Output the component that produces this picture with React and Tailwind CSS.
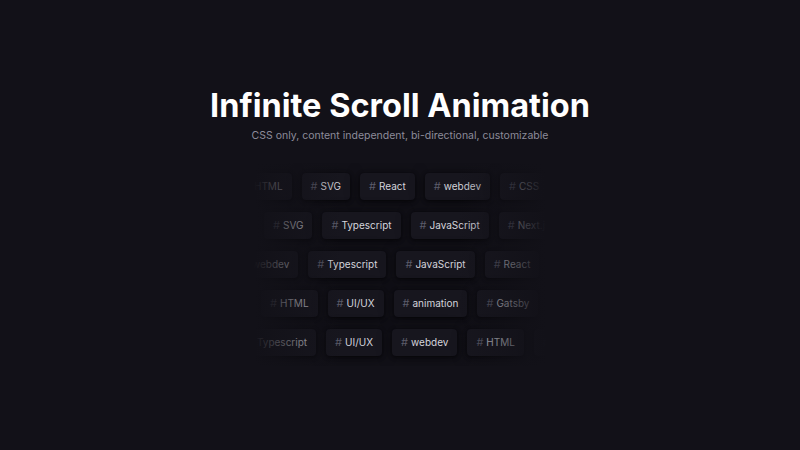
const rows = [
  { offset: "ml-[-19px]", tags: ["HTML", "SVG", "React", "webdev", "CSS", "Gatsby"] },
  { offset: "ml-[10px]", tags: ["SVG", "Typescript", "JavaScript", "Next.js", "HTML"] },
  { offset: "ml-[-21px]", tags: ["webdev", "Typescript", "JavaScript", "React", "UI/UX"] },
  { offset: "ml-[7px]", tags: ["HTML", "UI/UX", "animation", "Gatsby", "SVG"] },
  { offset: "ml-[-16px]", tags: ["Typescript", "UI/UX", "webdev", "HTML", "Tailwind"] },
];

function Tag({ label }) {
  return (
    <div className="flex shrink-0 items-center gap-[3px] mr-[10px] h-[27px] px-[9px] rounded-[4px] bg-[#17161e] text-[10px] font-normal text-[#d4d4dc] shadow-[0_1px_2px_rgba(0,0,0,0.2),0_1px_5px_rgba(0,0,0,0.3),0_2px_15px_rgba(0,0,0,0.4)]">
      <span className="text-[11px] text-[#5c5c6a]">#</span>
      <span>{label}</span>
    </div>
  );
}

export default function App() {
  return (
    <div className="w-[800px] h-[450px] bg-[#121118] flex flex-col items-center pt-[88px] font-['Inter',sans-serif]">
      <h1 className="text-[32.5px] leading-[36px] font-bold text-white">Infinite Scroll Animation</h1>
      <p className="mt-[4px] text-[10.5px] text-[#8d8c9a]">CSS only, content independent, bi-directional, customizable</p>
      <div className="relative mt-[19px] w-[292px] overflow-hidden py-[10px] flex flex-col gap-[12px]">
        {rows.map((row, i) => (
          <div key={i} className={`flex whitespace-nowrap ${row.offset}`}>
            {row.tags.map((t, j) => (
              <Tag key={j} label={t} />
            ))}
          </div>
        ))}
        <div className="pointer-events-none absolute inset-0 bg-[linear-gradient(90deg,#121118,transparent_30%,transparent_70%,#121118)]" />
      </div>
    </div>
  );
}
